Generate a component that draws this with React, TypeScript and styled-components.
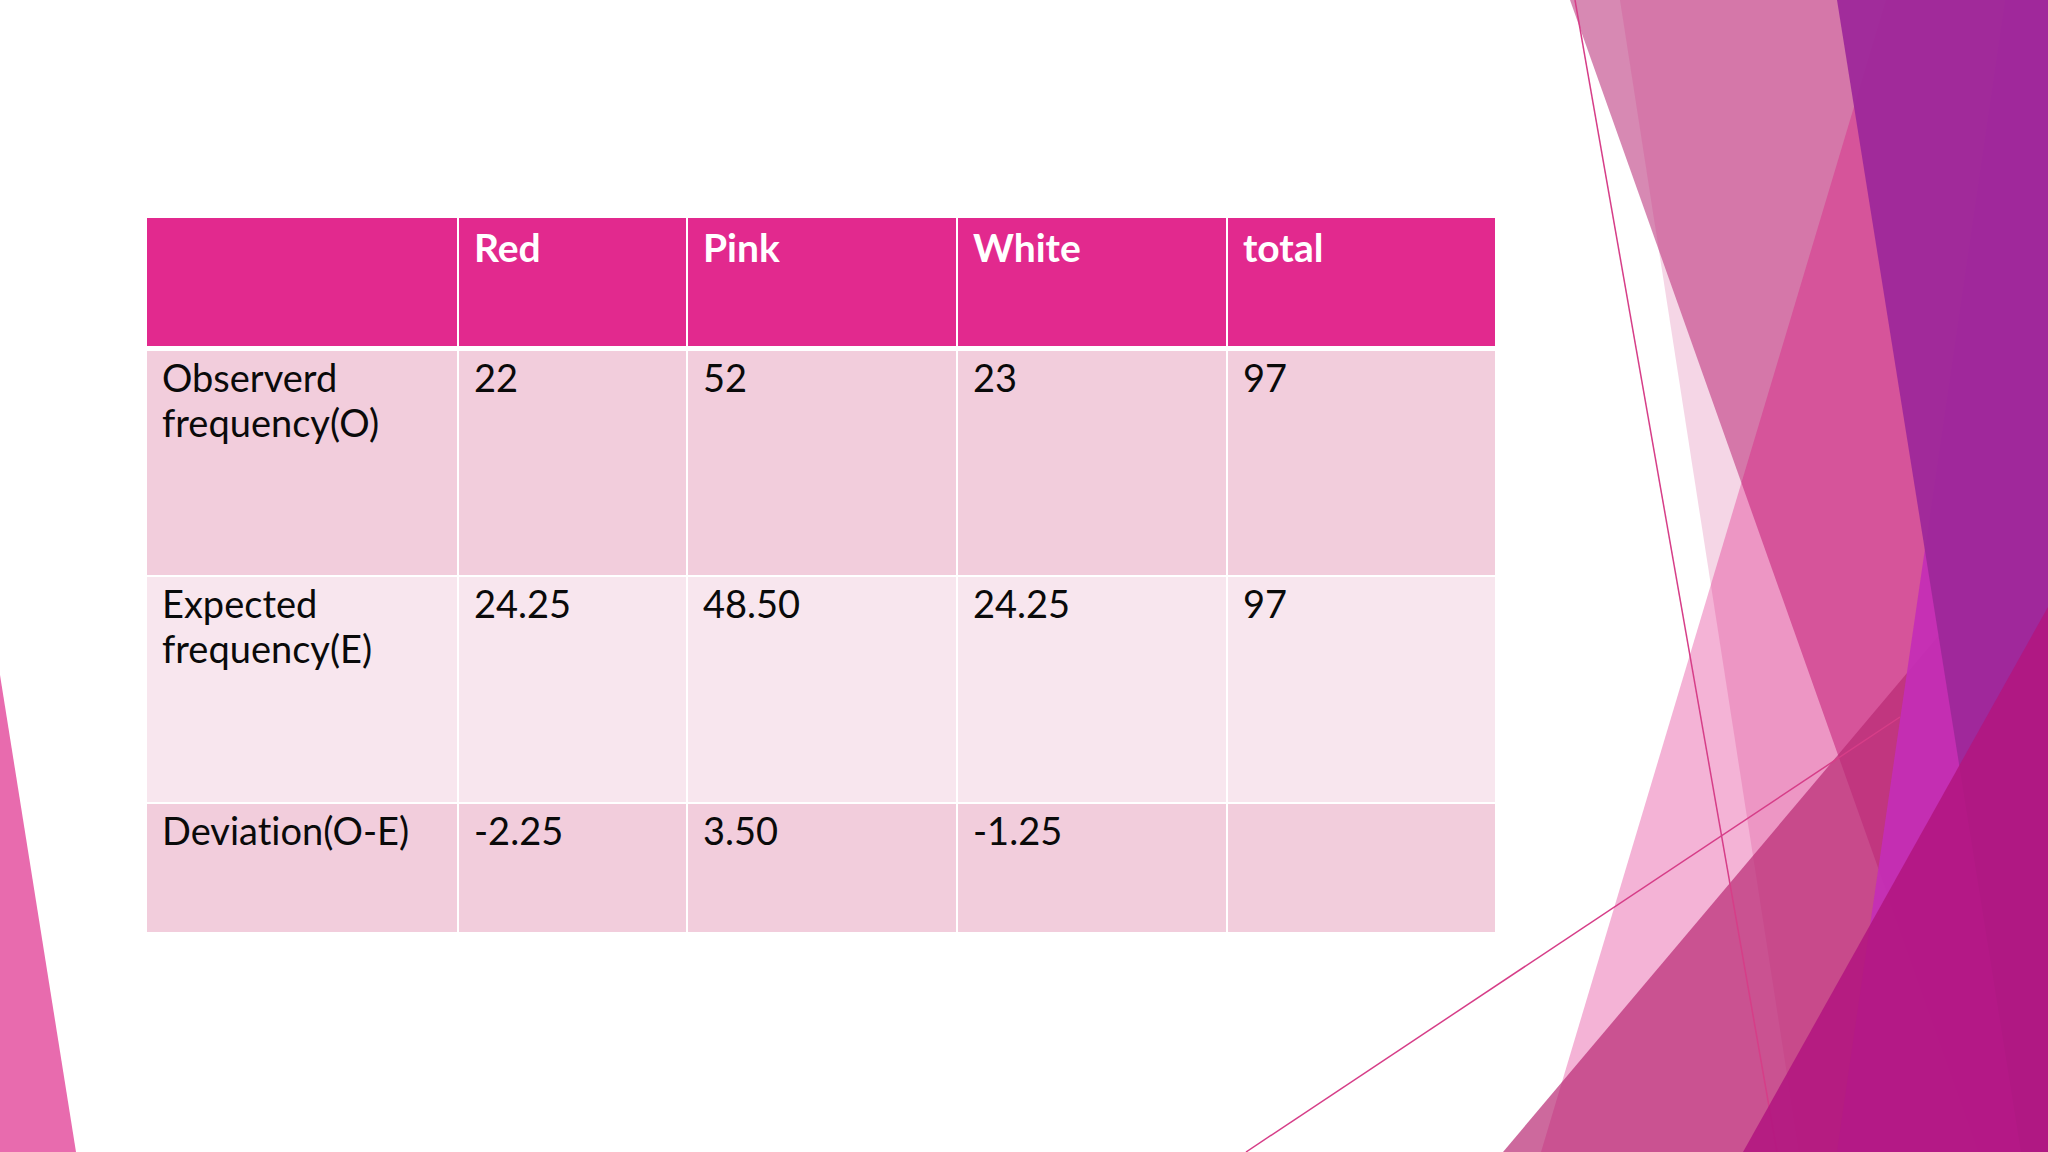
import * as React from "react";
import styled, { createGlobalStyle } from "styled-components";

const GlobalStyle = createGlobalStyle`
    html, body {
        margin: 0;
        padding: 0;
        background: #ffffff;
    }
    body {
        font-family: Lato, "Open Sans", "Liberation Sans", sans-serif;
    }
`;

const Slide = styled.div`
    position: relative;
    width: 2048px;
    height: 1152px;
    overflow: hidden;
    background: #ffffff;
`;

const Decor = styled.svg`
    position: absolute;
    left: 0;
    top: 0;
    width: 2048px;
    height: 1152px;
    z-index: 0;
`;

const Content = styled.div`
    position: relative;
    z-index: 1;
    padding: 218px 0 0 147px;
`;

const Table = styled.div`
    display: grid;
    grid-template-columns: 310px 229px 270px 270px 269px;
    grid-template-rows: 133px 224px 227px 130px;
    width: 1348px;
`;

type Tone = "head" | "dark" | "light";

const tones: Record<Tone, string> = {
    head: "#e2298e",
    dark: "#f2cddc",
    light: "#f8e6ee",
};

const Cell = styled.div<{ $tone: Tone; $first: boolean; $top: number }>`
    box-sizing: border-box;
    background: ${(p) => tones[p.$tone]};
    border-left: ${(p) => (p.$first ? "none" : "2px solid #ffffff")};
    border-top: ${(p) => (p.$top ? `${p.$top}px solid #ffffff` : "none")};
    border-bottom: ${(p) => (p.$tone === "head" ? "5px solid #ffffff" : "none")};
    padding: ${(p) => (p.$tone === "head" ? "7px 15px 0" : "4px 15px 0")};
    font-size: ${(p) => (p.$tone === "head" ? "39px" : "38px")};
    line-height: 45px;
    font-weight: ${(p) => (p.$tone === "head" ? 700 : 400)};
    font-variant-ligatures: none;
    color: ${(p) => (p.$tone === "head" ? "#ffffff" : "#0a0a0a")};
`;

const header = ["", "Red", "Pink", "White", "total"];

const rows: { tone: Tone; cells: string[] }[] = [
    { tone: "dark", cells: ["Observerd frequency(O)", "22", "52", "23", "97"] },
    { tone: "light", cells: ["Expected frequency(E)", "24.25", "48.50", "24.25", "97"] },
    { tone: "dark", cells: ["Deviation(O-E)", "-2.25", "3.50", "-1.25", ""] },
];

const Background = () => (
    <Decor viewBox="0 0 2048 1152" aria-hidden="true">
        <polygon points="0,675 76,1152 0,1152" fill="#e86bae" />
        <polygon points="1570,0 2048,0 2048,1152 1979,1152" fill="rgb(205,108,160)" fillOpacity={0.8} />
        <polygon points="1620,0 2048,0 2048,1152 1799,1152" fill="rgb(205,50,130)" fillOpacity={0.2} />
        <polygon points="1886,0 2048,0 2048,1152 1541,1152" fill="rgb(218,2,118)" fillOpacity={0.3} />
        <polygon points="1503,1152 2048,506 2048,1152" fill="rgb(184,42,116)" fillOpacity={0.7} />
        <line x1="1575" y1="0" x2="1777" y2="1152" stroke="rgb(214,62,136)" strokeWidth={1.5} />
        <line x1="1246" y1="1152" x2="1900" y2="717" stroke="rgb(214,62,136)" strokeWidth={1.5} />
        <polygon points="2005,0 2048,0 2048,1152 1837,1152" fill="rgb(196,46,182)" fillOpacity={0.92} />
        <polygon points="1837,0 2048,0 2048,1152 2021,1152" fill="rgb(158,40,154)" fillOpacity={0.95} />
        <polygon points="1743,1152 2048,607 2048,1152" fill="rgb(178,22,128)" fillOpacity={0.88} />
    </Decor>
);

export default function App() {
    return (
        <Slide>
            <GlobalStyle />
            <Background />
            <Content>
                <Table role="table">
                    {header.map((h, i) => (
                        <Cell key={`h${i}`} $tone="head" $first={i === 0} $top={0}>
                            {h}
                        </Cell>
                    ))}
                    {rows.map((r, ri) =>
                        r.cells.map((c, ci) => (
                            <Cell
                                key={`${ri}-${ci}`}
                                $tone={r.tone}
                                $first={ci === 0}
                                $top={ri === 0 ? 0 : 2}
                            >
                                {c}
                            </Cell>
                        ))
                    )}
                </Table>
            </Content>
        </Slide>
    );
}
